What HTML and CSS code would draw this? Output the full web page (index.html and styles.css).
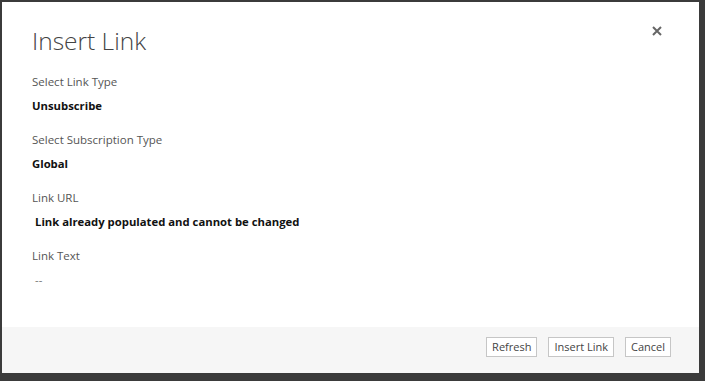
FILE: index.html
```html
<!DOCTYPE html>
<html lang="en">
  <head>
    <meta charset="UTF-8" />
    <meta name="viewport" content="width=device-width, initial-scale=1.0" />
    <title>Insert Link</title>
    <link rel="stylesheet" href="styles.css">
  </head>
  <body>
    <!-- 대화상자 -->
    <div class="dialog">
      <div class="dialog-body">
        <div class="dialog-head">
          <h1 class="dialog-title">Insert Link</h1>
          <button class="btn-close" type="button" aria-label="Close">
            <svg width="10" height="10" viewBox="0 0 10 10">
              <path d="M1 1L9 9M9 1L1 9" stroke="#666" stroke-width="2" />
            </svg>
          </button>
        </div>
        <div class="field">
          <div class="field-label">Select Link Type</div>
          <div class="field-value">Unsubscribe</div>
        </div>
        <div class="field">
          <div class="field-label">Select Subscription Type</div>
          <div class="field-value">Global</div>
        </div>
        <div class="field">
          <div class="field-label">Link URL</div>
          <div class="field-value indent">Link already populated and cannot be changed</div>
        </div>
        <div class="field">
          <div class="field-label">Link Text</div>
          <div class="field-value empty">--</div>
        </div>
      </div>
      <!-- 하단 버튼영역 -->
      <div class="dialog-foot">
        <button class="btn" type="button">Refresh</button>
        <button class="btn" type="button">Insert Link</button>
        <button class="btn" type="button">Cancel</button>
      </div>
    </div>
  </body>
</html>
```

FILE: styles.css
```css
/* 기본 초기화 */
html,
body,
h1 {
  margin: 0;
  padding: 0;
}
body {
  height: 381px;
  background-color: #3b3b3b;
  font-family: "Open Sans", "Liberation Sans", sans-serif;
  overflow: hidden;
}

/* 대화상자 박스 */
.dialog {
  box-sizing: border-box;
  width: 697px;
  height: 371px;
  margin: 2px 0 0 2px;
  background-color: #fff;
  display: flex;
  flex-direction: column;
}
.dialog-body {
  flex: 1;
  padding: 21px 37px 0 30px;
}
.dialog-head {
  display: flex;
  justify-content: space-between;
  align-items: flex-start;
  margin-bottom: 15px;
}
.dialog-title {
  font-weight: 300;
  font-size: 24.5px;
  line-height: 36px;
  color: #444;
}
.btn-close {
  border: 0;
  padding: 0;
  margin-top: 3px;
  width: 10px;
  height: 10px;
  background: none;
  display: flex;
}

/* 입력항목 */
.field {
  margin-bottom: 18px;
}
.field-label {
  font-size: 11.5px;
  line-height: 16px;
  color: #555;
}
.field-value {
  margin-top: 8px;
  font-size: 11.3px;
  line-height: 16px;
  font-weight: 700;
  color: #111;
}
.field-value.indent {
  padding-left: 3px;
}
.field-value.empty {
  font-weight: 400;
  color: #777;
  padding-left: 3px;
}

/* 하단영역 */
.dialog-foot {
  height: 46px;
  box-sizing: border-box;
  padding: 10px 28px 0 0;
  background-color: #f6f6f6;
  display: flex;
  justify-content: flex-end;
  align-items: flex-start;
  gap: 11px;
}
.btn {
  height: 20px;
  box-sizing: border-box;
  padding: 0 5px;
  border: 1px solid #c6c6c6;
  background-color: #fff;
  font-family: "Open Sans", "Liberation Sans", sans-serif;
  font-size: 11px;
  line-height: 18px;
  color: #444;
}
```
